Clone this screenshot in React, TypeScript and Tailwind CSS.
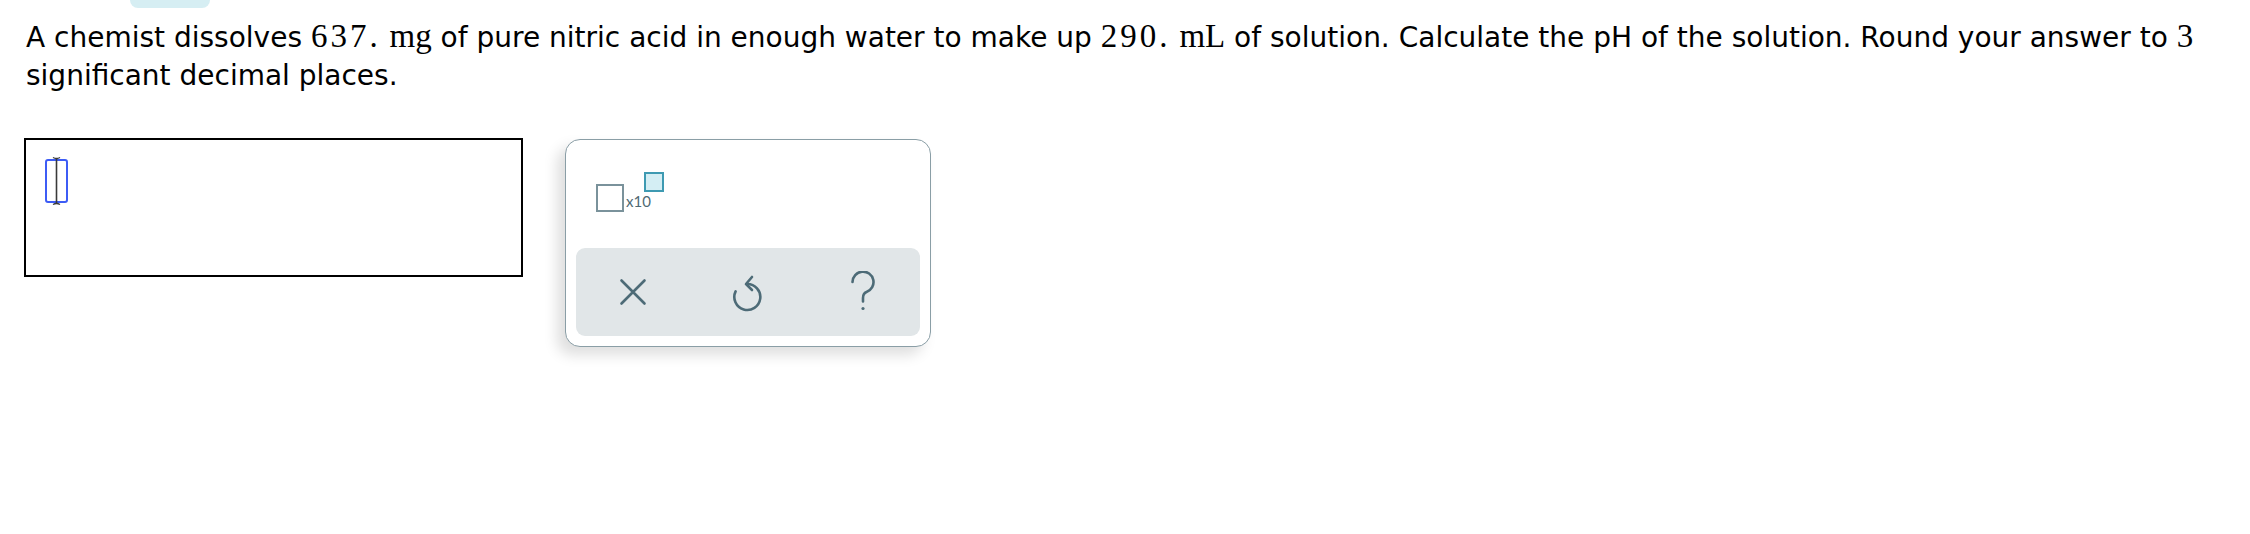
const serif = 'font-["Liberation_Serif",serif] text-[33px] leading-none';

const Num = ({ children, wide }: { children: React.ReactNode; wide?: boolean }) => (
  <span className={wide ? serif + ' tracking-[3px]' : serif}>{children}</span>
);

const Cursor = () => (
  <svg width="24" height="50" viewBox="0 0 24 50" fill="none">
    <rect x="1" y="4" width="21" height="42" rx="2" stroke="#3d5cf5" strokeWidth="2" fill="#fff" />
    <line x1="11.5" y1="2" x2="11.5" y2="48" stroke="#3a3a3a" strokeWidth="1.6" />
    <path d="M8 1.5 Q11.5 3.5 15 1.5 M8 48.5 Q11.5 46.5 15 48.5" stroke="#3a3a3a" strokeWidth="1.4" />
  </svg>
);

const XIcon = () => (
  <svg width="28" height="28" viewBox="0 0 28 28" fill="none" stroke="#4d6b77" strokeWidth="2.6" strokeLinecap="round">
    <path d="M2.5 2.5 L25.5 25.5 M25.5 2.5 L2.5 25.5" />
  </svg>
);

const UndoIcon = () => (
  <svg width="32" height="40" viewBox="0 0 32 40" fill="none" stroke="#4d6b77" strokeWidth="2.6" strokeLinecap="round" strokeLinejoin="round">
    <path d="M15 12 A13 13 0 1 1 3.6 19.4" />
    <path d="M20 5 L14 12 L20 18" />
  </svg>
);

const HelpIcon = () => (
  <svg width="26" height="42" viewBox="0 0 26 42" fill="none" stroke="#4d6b77" strokeWidth="2.6" strokeLinecap="round">
    <path d="M2.5 11 A10.5 10.5 0 1 1 16.5 21 C14 22 13 24 13 27 V30.5" />
    <circle cx="13" cy="37.5" r="1.6" fill="#4d6b77" stroke="none" />
  </svg>
);

export default function App() {
  return (
    <div className='min-h-screen bg-white pl-[26px] pr-[16px] font-["DejaVu_Sans",sans-serif] text-black'>
      <div className="ml-[104px] h-[8px] w-[80px] rounded-b-[10px] bg-[#d6eef3]" />

      <p className="mt-[11px] text-[28px] leading-[38px]">
        A chemist dissolves <Num wide>637.</Num> <Num>mg</Num> of pure nitric acid in enough water to make up{' '}
        <Num wide>290.</Num> <Num>mL</Num> of solution. Calculate the pH of the solution. Round your answer to{' '}
        <Num>3</Num> significant decimal places.
      </p>

      <div className="mt-[43px] -ml-[2px] flex items-start gap-[42px]">
        <div className="h-[139px] w-[499px] border-2 border-black pl-[19px] pt-[16px]">
          <Cursor />
        </div>

        <div className="mt-[1px] flex h-[208px] w-[366px] flex-col rounded-[15px] border-[1.5px] border-[#8a9ea6] bg-white shadow-[-8px_8px_14px_rgba(0,0,0,0.13)]">
          <div className="h-[108px] pl-[30px] pt-[32px]">
            <div className="flex items-start">
              <div className="mt-[12px] h-[28px] w-[28px] border-[2.5px] border-[#7a929b]" />
              <span className='mt-[22px] ml-[2px] font-["Lato",sans-serif] text-[15px] leading-none text-[#4f6a74]'>
                x10
              </span>
              <div className="-ml-[7px] h-[20px] w-[20px] border-[2.5px] border-[#3e9ab2] bg-[#d4eef4]" />
            </div>
          </div>
          <div className="mx-[10px] mb-[10px] grid h-[88px] grid-cols-3 items-center justify-items-center rounded-[9px] bg-[#e1e6e8]">
            <XIcon />
            <UndoIcon />
            <HelpIcon />
          </div>
        </div>
      </div>
    </div>
  );
}
